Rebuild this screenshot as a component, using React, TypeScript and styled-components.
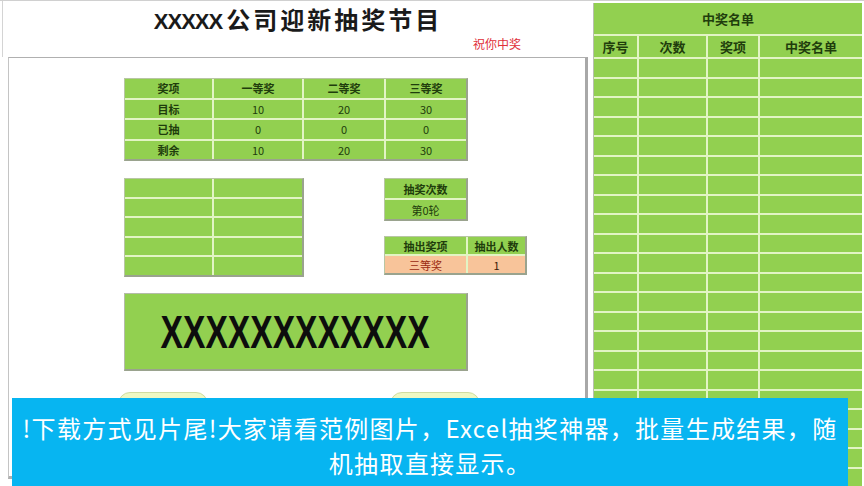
import React from 'react';
import styled, { createGlobalStyle } from 'styled-components';

const GREEN = '#92d050';
const GRID_LINE = '#e2f4c4';
const DARK_TEXT = '#1f3d0c';
const EDGE = '#9aa38e';

const GlobalStyle = createGlobalStyle`
  html, body {
    margin: 0;
    padding: 0;
    background: #ffffff;
  }
  body {
    font-family: "Noto Sans CJK SC", "Noto Sans", sans-serif;
  }
`;

const prizeRows = [
  { label: '奖项', values: ['一等奖', '二等奖', '三等奖'], head: true },
  { label: '目标', values: ['10', '20', '30'] },
  { label: '已抽', values: ['0', '0', '0'] },
  { label: '剩余', values: ['10', '20', '30'] },
];

const winnerColumns = ['序号', '次数', '奖项', '中奖名单'];
const WINNER_ROWS = 22;
const BLANK_ROWS = 5;

export default function App() {
  return (
    <>
      <GlobalStyle />
      <Sheet>
        <LeftColumn>
          <TitleBar>
            <Title>
              <TitleLatin>XXXXX</TitleLatin>公司迎新抽奖节目
            </Title>
            <Blessing>祝你中奖</Blessing>
          </TitleBar>

          <Panel>
            <GridTable $columns="87px 88px 80px 80px" $rowHeight={18.5}>
              {prizeRows.map((row) => (
                <React.Fragment key={row.label}>
                  <Cell $bold>{row.label}</Cell>
                  {row.values.map((value, i) => (
                    <Cell key={i} $bold={row.head}>
                      {value}
                    </Cell>
                  ))}
                </React.Fragment>
              ))}
            </GridTable>

            <MiddleRow>
              <GridTable $columns="87px 88px" $rowHeight={17.5}>
                {Array.from({ length: BLANK_ROWS * 2 }).map((_, i) => (
                  <Cell key={i} />
                ))}
              </GridTable>

              <SideStack>
                <GridTable $columns="81px" $rowHeight={19}>
                  <Cell $bold>抽奖次数</Cell>
                  <Cell>第0轮</Cell>
                </GridTable>
                <GridTable $columns="81px 57px" $rowHeight={17}>
                  <Cell $bold>抽出奖项</Cell>
                  <Cell $bold>抽出人数</Cell>
                  <Cell $tone="peach">三等奖</Cell>
                  <Cell $tone="peach" $ink="#3a1a08">
                    1
                  </Cell>
                </GridTable>
              </SideStack>
            </MiddleRow>

            <Display>
              <DisplayText>XXXXXXXXXXXX</DisplayText>
            </Display>

            <ButtonRow>
              <PillButton />
              <PillButton />
            </ButtonRow>
          </Panel>
        </LeftColumn>

        <WinnerPanel>
          <WinnerTitle>中奖名单</WinnerTitle>
          {winnerColumns.map((name) => (
            <WinnerHead key={name}>{name}</WinnerHead>
          ))}
          {Array.from({ length: WINNER_ROWS * 4 }).map((_, i) => (
            <WinnerCell key={i} />
          ))}
        </WinnerPanel>

        <Banner>
          <BannerLine>!下载方式见片尾!大家请看范例图片，Excel抽奖神器，批量生成结果，随</BannerLine>
          <BannerLine>机抽取直接显示。</BannerLine>
        </Banner>
      </Sheet>
    </>
  );
}

const Sheet = styled.div`
  position: relative;
  display: flex;
  width: 864px;
  height: 486px;
  overflow: hidden;
  border-top: 1px solid #d0d0d0;
  box-sizing: border-box;
`;

const LeftColumn = styled.div`
  display: flex;
  flex-direction: column;
  width: 593px;
  flex-shrink: 0;
`;

const TitleBar = styled.div`
  display: flex;
  flex-direction: column;
  align-items: center;
  height: 56px;
  margin-left: 2px;
  padding-top: 6px;
  box-sizing: border-box;
  border-left: 1px solid #d4d4d4;
`;

const Title = styled.div`
  height: 28px;
  line-height: 28px;
  font-family: "Liberation Serif", "Noto Sans CJK SC", serif;
  font-size: 24px;
  font-weight: 700;
  letter-spacing: 3px;
  color: #1a1a1a;
`;

const TitleLatin = styled.span`
  font-family: "Liberation Sans", sans-serif;
  font-size: 22px;
  letter-spacing: -1px;
  margin-right: 4px;
`;

const Blessing = styled.div`
  align-self: flex-end;
  margin: 2px 72px 0 0;
  line-height: 14px;
  font-size: 12px;
  color: #e0303a;
`;

const Panel = styled.div`
  display: flex;
  flex-direction: column;
  align-items: flex-start;
  flex: 1;
  margin: 0 5px 7px 8px;
  padding: 20px 0 0 115px;
  background: #ffffff;
  border-top: 1px solid #b0b0b0;
  border-left: 1px solid #c4c4c4;
  border-right: 3px solid #a8a8a8;
  border-bottom: 3px solid #b0b0b0;
  box-sizing: border-box;
`;

const GridTable = styled.div<{ $columns: string; $rowHeight: number }>`
  display: grid;
  grid-template-columns: ${(p) => p.$columns};
  grid-auto-rows: ${(p) => p.$rowHeight}px;
  gap: 2px;
  background: ${GRID_LINE};
  border: 1px solid #b8c6a4;
  border-right: 2px solid ${EDGE};
  border-bottom: 2px solid ${EDGE};
`;

const Cell = styled.div<{ $bold?: boolean; $tone?: 'peach'; $ink?: string }>`
  display: flex;
  align-items: center;
  justify-content: center;
  background: ${(p) => (p.$tone === 'peach' ? '#f8c49a' : GREEN)};
  font-size: 11px;
  font-weight: ${(p) => (p.$bold ? 700 : 400)};
  color: ${(p) => p.$ink ?? (p.$tone === 'peach' ? '#9a2a10' : DARK_TEXT)};
  white-space: nowrap;
`;

const MiddleRow = styled.div`
  display: flex;
  align-items: flex-start;
  gap: 80px;
  margin-top: 17px;
`;

const SideStack = styled.div`
  display: flex;
  flex-direction: column;
  align-items: flex-start;
  gap: 15px;
`;

const Display = styled.div`
  display: flex;
  align-items: center;
  justify-content: center;
  width: 344px;
  height: 78px;
  margin-top: 16px;
  background: ${GREEN};
  border: 1px solid #b4bca8;
  border-right: 2px solid ${EDGE};
  border-bottom: 2px solid ${EDGE};
  box-sizing: border-box;
  overflow: hidden;
`;

const DisplayText = styled.span`
  display: inline-block;
  font-family: "Liberation Sans", Arial, sans-serif;
  font-size: 47px;
  font-weight: 700;
  color: #0d0d0d;
  transform: scaleX(0.715);
  white-space: nowrap;
`;

const ButtonRow = styled.div`
  display: flex;
  gap: 182px;
  margin: 21px 0 0 -6px;
`;

const PillButton = styled.div`
  width: 90px;
  height: 30px;
  border-radius: 12px;
  background: #eef8c4;
  border: 1px solid #cfdca0;
  box-sizing: border-box;
`;

const WinnerPanel = styled.div`
  display: grid;
  grid-template-columns: 43px 67px 50px 102px;
  grid-template-rows: 31px 21px;
  grid-auto-rows: 17.5px;
  gap: 2px;
  align-content: start;
  width: 268px;
  margin-top: 2px;
  background: ${GRID_LINE};
  border-left: 1px solid #b8c0ae;
  overflow: hidden;
`;

const WinnerTitle = styled.div`
  grid-column: 1 / -1;
  display: flex;
  align-items: center;
  justify-content: center;
  background: ${GREEN};
  font-size: 13px;
  font-weight: 700;
  color: ${DARK_TEXT};
`;

const WinnerHead = styled.div`
  display: flex;
  align-items: center;
  justify-content: center;
  background: ${GREEN};
  font-size: 13px;
  font-weight: 700;
  color: ${DARK_TEXT};
`;

const WinnerCell = styled.div`
  background: ${GREEN};
`;

const Banner = styled.div`
  position: absolute;
  left: 12px;
  top: 397px;
  width: 836px;
  height: 92px;
  padding-top: 12px;
  box-sizing: border-box;
  background: #07b5f1;
  color: #ffffff;
  font-family: "Noto Sans CJK SC", "Noto Sans", sans-serif;
  font-size: 24px;
  letter-spacing: 1.3px;
  text-align: center;
  white-space: nowrap;
`;

const BannerLine = styled.div`
  height: 35px;
  line-height: 35px;
`;
